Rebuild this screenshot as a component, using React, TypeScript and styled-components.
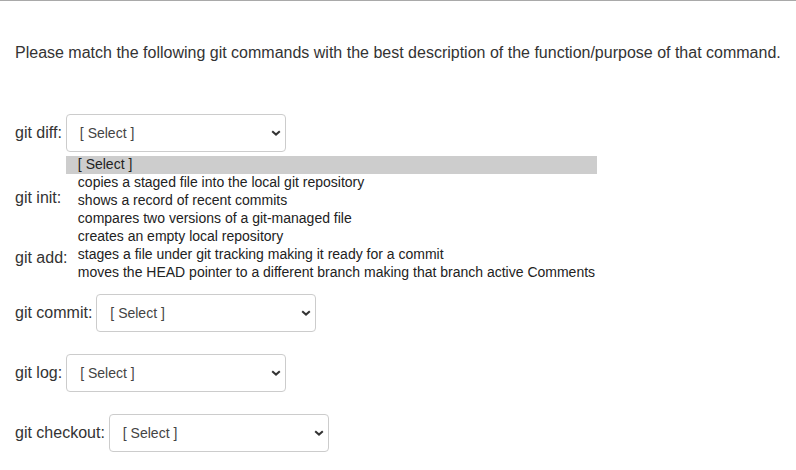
import React from "react";
import styled, { createGlobalStyle } from "styled-components";

const GlobalStyle = createGlobalStyle`
  html, body { margin: 0; padding: 0; background: #fff; }
  body {
    font-family: "Liberation Sans", Arial, sans-serif;
    color: #333;
  }
`;

const Page = styled.div`
  border-top: 1px solid #a9a9a9;
  padding: 0 15px;
  height: 469px;
  overflow: hidden;
`;

const Question = styled.p`
  margin: 41px 0 49px;
  font-size: 16px;
  line-height: 22.86px;
  color: #333;
`;

const Row = styled.div`
  display: flex;
  align-items: baseline;
  gap: 4px;
  margin-bottom: 22px;
`;

const Label = styled.span<{ $covered?: boolean }>`
  font-size: 16px;
  line-height: 22.86px;
  color: #333;
  z-index: 11;
  transform: ${(p) => (p.$covered ? "translateY(5px)" : "none")};
`;

const SelectWrap = styled.div`
  position: relative;
  display: inline-flex;
`;

const Select = styled.select`
  appearance: none;
  -webkit-appearance: none;
  width: 220px;
  height: 38px;
  box-sizing: border-box;
  border: 1px solid #ccc;
  border-radius: 4px;
  background: #fff;
  padding: 0 28px 0 13px;
  font-family: "Liberation Sans", Arial, sans-serif;
  font-size: 14px;
  color: #444;
  outline: none;
`;

const Chevron = styled.svg`
  position: absolute;
  right: 5px;
  top: 16px;
  width: 10px;
  height: 6px;
  pointer-events: none;
`;

const Menu = styled.ul`
  position: absolute;
  top: calc(100% + 4px);
  left: -5px;
  width: 531px;
  margin: 0;
  padding: 0 0 0 5px;
  list-style: none;
  background: #fff;
  z-index: 10;
`;

const MenuItem = styled.li<{ $active?: boolean }>`
  height: 18px;
  line-height: 17px;
  padding-left: 12px;
  font-size: 14px;
  color: #222;
  white-space: nowrap;
  background: ${(p) => (p.$active ? "#cdcdcd" : "transparent")};
`;

const options = [
  "[ Select ]",
  "copies a staged file into the local git repository",
  "shows a record of recent commits",
  "compares two versions of a git-managed file",
  "creates an empty local repository",
  "stages a file under git tracking making it ready for a commit",
  "moves the HEAD pointer to a different branch making that branch active Comments",
];

const commands = ["git diff", "git init", "git add", "git commit", "git log", "git checkout"];

const Dropdown: React.FC<{ open?: boolean }> = ({ open }) => (
  <SelectWrap>
    <Select defaultValue="[ Select ]">
      {options.map((o) => (
        <option key={o} value={o}>
          {o}
        </option>
      ))}
    </Select>
    <Chevron viewBox="0 0 10 6">
      <path d="M1.2 1.2 L5 4.6 L8.8 1.2" fill="none" stroke="#333" strokeWidth="2" />
    </Chevron>
    {open && (
      <Menu>
        {options.map((o, i) => (
          <MenuItem key={o} $active={i === 0}>
            {o}
          </MenuItem>
        ))}
      </Menu>
    )}
  </SelectWrap>
);

export default function App() {
  return (
    <>
      <GlobalStyle />
      <Page>
        <Question>
          Please match the following git commands with the best description of the function/purpose of that command.
        </Question>
        {commands.map((c, i) => (
          <Row key={c}>
            <Label $covered={i === 1 || i === 2}>{c}:</Label>
            <Dropdown open={i === 0} />
          </Row>
        ))}
      </Page>
    </>
  );
}
